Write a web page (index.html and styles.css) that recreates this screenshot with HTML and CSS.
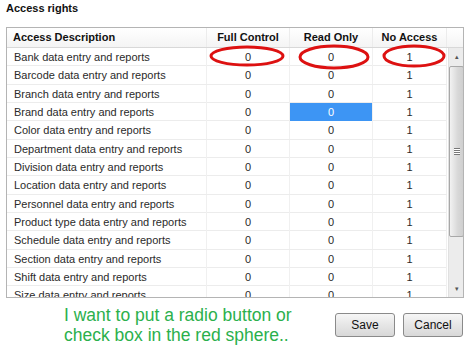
FILE: index.html
```html
<!DOCTYPE html>
<html>

<head>
  <meta charset="utf-8" name="viewport" content="width=device-width, initial-scale=1">
  <title>Access rights</title>
  <link rel="stylesheet" href="styles.css">
</head>

<body>
  <div class="title">Access rights</div>

  <div class="grid">
    <div class="head">
      <div class="hcell left">Access Description</div>
      <div class="hcell">Full Control</div>
      <div class="hcell">Read Only</div>
      <div class="hcell">No Access</div>
      <div class="hcell filler"></div>
    </div>
    <div class="body">
      <div class="rows">
        <div class="row"><div class="cell left">Bank data entry and reports</div><div class="cell">0</div><div class="cell">0</div><div class="cell">1</div></div>
        <div class="row"><div class="cell left">Barcode data entry and reports</div><div class="cell">0</div><div class="cell">0</div><div class="cell">1</div></div>
        <div class="row"><div class="cell left">Branch data entry and reports</div><div class="cell">0</div><div class="cell">0</div><div class="cell">1</div></div>
        <div class="row"><div class="cell left">Brand data entry and reports</div><div class="cell">0</div><div class="cell selected">0</div><div class="cell">1</div></div>
        <div class="row"><div class="cell left">Color data entry and reports</div><div class="cell">0</div><div class="cell">0</div><div class="cell">1</div></div>
        <div class="row"><div class="cell left">Department data entry and reports</div><div class="cell">0</div><div class="cell">0</div><div class="cell">1</div></div>
        <div class="row"><div class="cell left">Division data entry and reports</div><div class="cell">0</div><div class="cell">0</div><div class="cell">1</div></div>
        <div class="row"><div class="cell left">Location data entry and reports</div><div class="cell">0</div><div class="cell">0</div><div class="cell">1</div></div>
        <div class="row"><div class="cell left">Personnel data entry and reports</div><div class="cell">0</div><div class="cell">0</div><div class="cell">1</div></div>
        <div class="row"><div class="cell left">Product type data entry and reports</div><div class="cell">0</div><div class="cell">0</div><div class="cell">1</div></div>
        <div class="row"><div class="cell left">Schedule data entry and reports</div><div class="cell">0</div><div class="cell">0</div><div class="cell">1</div></div>
        <div class="row"><div class="cell left">Section data entry and reports</div><div class="cell">0</div><div class="cell">0</div><div class="cell">1</div></div>
        <div class="row"><div class="cell left">Shift data entry and reports</div><div class="cell">0</div><div class="cell">0</div><div class="cell">1</div></div>
        <div class="row"><div class="cell left">Size data entry and reports</div><div class="cell">0</div><div class="cell">0</div><div class="cell">1</div></div>
      </div>
      <div class="scrollbar">
        <div class="arrow">&#9652;</div>
        <div class="track">
          <div class="thumb"><span class="grip"></span></div>
        </div>
        <div class="arrow">&#9662;</div>
      </div>
    </div>

    <!-- red marks drawn over the first row -->
    <svg class="marks" width="474" height="80" viewBox="0 0 474 80">
      <ellipse cx="246" cy="28" rx="36" ry="9" />
      <ellipse cx="333" cy="29" rx="34" ry="11" />
      <ellipse cx="413" cy="28" rx="30" ry="10" />
    </svg>
  </div>

  <div class="footer">
    <div class="note">I want to put a radio button or<br>check box in the red sphere..</div>
    <div class="buttons">
      <button type="button" class="btn">Save</button>
      <button type="button" class="btn">Cancel</button>
    </div>
  </div>
</body>

</html>
```

FILE: styles.css
```css
body {
  margin: 0;
  background-color: white;
  font-family: "Liberation Sans", Arial, sans-serif;
  font-size: 11px;
  color: #222;
}

.title {
  padding: 2px 0 0 6px;
  height: 16px;
  font-weight: bold;
  font-size: 11px;
  color: #111;
}

.grid {
  position: relative;
  margin: 9px 0 0 6px;
  width: 456px;
  border: 1px solid #b4b4b4;
}

.head {
  display: grid;
  grid-template-columns: 200px 83px 83px 74px 16px;
  height: 19px;
  border-bottom: 1px solid #d8d8d8;
  background: linear-gradient(#ffffff, #f4f4f4);
}

.hcell {
  font-weight: bold;
  color: #111;
  text-align: center;
  line-height: 19px;
  border-right: 1px solid #ececec;
}

.hcell.filler {
  border-right: none;
}

.left {
  text-align: left;
  padding-left: 6px;
}

.body {
  display: flex;
  height: 249px;
  overflow: hidden;
}

.rows {
  width: 440px;
}

.row {
  display: grid;
  grid-template-columns: 200px 83px 83px 74px;
  height: 18.35px;
  border-bottom: 1px solid #ececec;
  box-sizing: border-box;
}

.cell {
  line-height: 18px;
  text-align: center;
  color: #2a2a2a;
  border-right: 1px solid #f0f0f0;
}

.cell.left {
  text-align: left;
  padding-left: 7px;
}

.cell.selected {
  background-color: #3d95f4;
  color: white;
}

.scrollbar {
  width: 15px;
  margin-left: 1px;
  display: flex;
  flex-direction: column;
  background-color: #ececec;
  border-left: 1px solid #e0e0e0;
}

.arrow {
  height: 17px;
  font-size: 7px;
  line-height: 17px;
  text-align: center;
  color: #555;
}

.track {
  flex: 1;
}

.thumb {
  margin-top: 1px;
  height: 169px;
  width: 13px;
  border: 1px solid #a8a8a8;
  border-radius: 2px;
  background: linear-gradient(90deg, #f2f2f2, #d8d8d8 60%, #cfcfcf);
  display: flex;
  align-items: center;
  justify-content: center;
}

.grip {
  width: 6px;
  height: 5px;
  border-top: 1px solid #777;
  border-bottom: 1px solid #777;
  background: linear-gradient(#fff 0 1px, #777 1px 2px, #fff 2px 3px, #777 3px 4px, #fff 4px);
}

.marks {
  position: absolute;
  left: -6px;
  top: 0;
}

.marks ellipse {
  fill: none;
  stroke: #dd1111;
  stroke-width: 3;
}

.footer {
  display: flex;
  justify-content: space-between;
  padding: 6px 11px 0 64px;
}

.note {
  font-size: 17.5px;
  line-height: 20px;
  color: #2bb04c;
  padding-top: 1px;
}

.buttons {
  display: flex;
  gap: 8px;
  padding-top: 9px;
}

.btn {
  width: 60px;
  height: 24px;
  font-family: "Liberation Sans", Arial, sans-serif;
  font-size: 12px;
  color: #111;
  border: 1px solid #8a8a8a;
  border-radius: 3px;
  background: linear-gradient(#f6f6f6, #e6e6e6 50%, #d8d8d8);
  padding: 0;
}
```
